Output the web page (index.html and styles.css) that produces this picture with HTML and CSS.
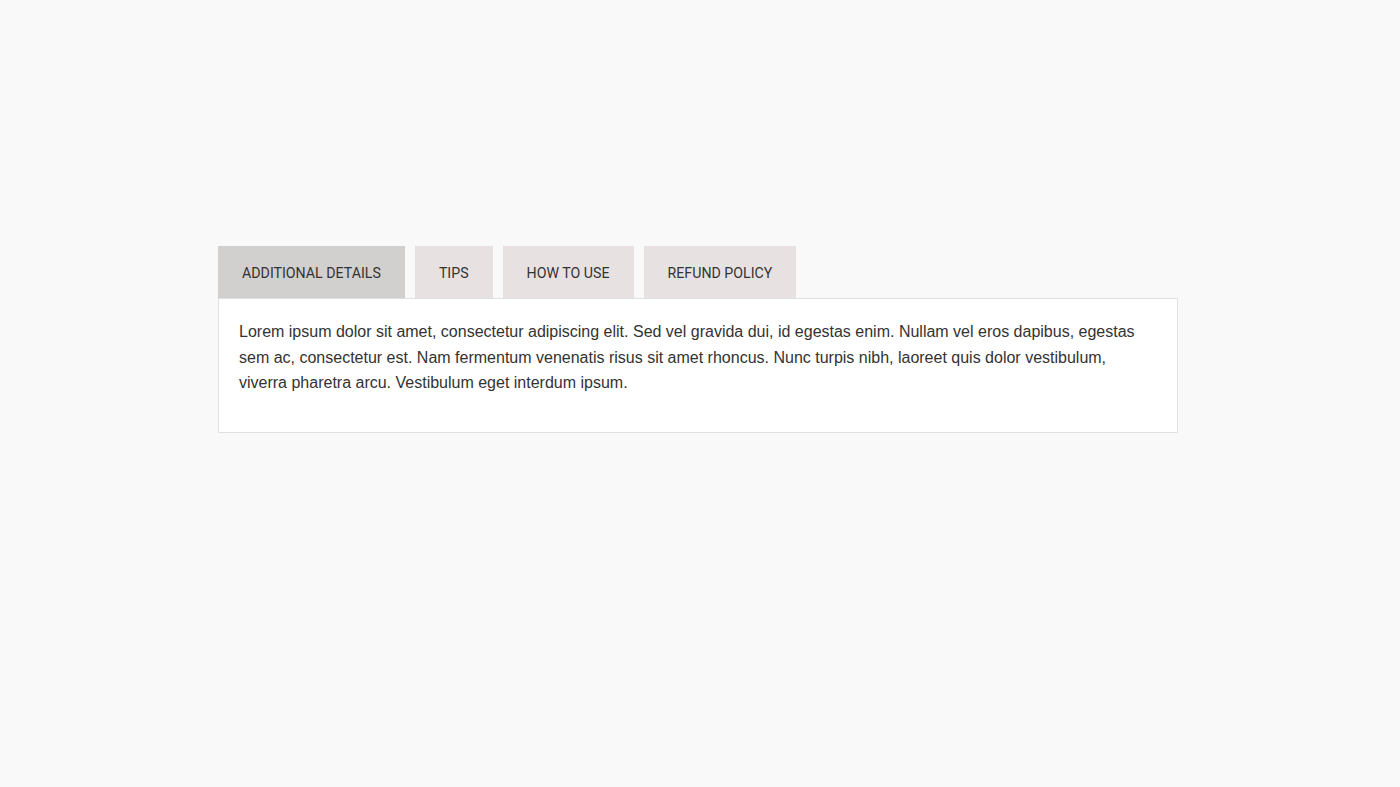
FILE: index.html
```html
<!DOCTYPE html>
<html>
<head>
<meta charset="utf-8">
<link rel="stylesheet" href="styles.css">
</head>
<body>
<div class="wrap">
  <div class="tabs">
    <div class="tab active">ADDITIONAL DETAILS</div>
    <div class="tab">TIPS</div>
    <div class="tab">HOW TO USE</div>
    <div class="tab">REFUND POLICY</div>
  </div>
  <div class="panel">
    <p>Lorem ipsum dolor sit amet, consectetur adipiscing elit. Sed vel gravida dui, id egestas enim. Nullam vel eros dapibus, egestas sem ac, consectetur est. Nam fermentum venenatis risus sit amet rhoncus. Nunc turpis nibh, laoreet quis dolor vestibulum, viverra pharetra arcu. Vestibulum eget interdum ipsum.</p>
  </div>
</div>
</body>
</html>
```
FILE: styles.css
```css
html, body {
  margin: 0;
  padding: 0;
  background: #f9f9f9;
}
body {
  height: 787px;
}
.wrap {
  width: 960px;
  margin: 0 0 0 218px;
  padding-top: 246px;
}
.tabs {
  display: flex;
  gap: 10px;
}
.tab {
  height: 52px;
  padding: 0 24px;
  display: flex;
  align-items: center;
  padding-top: 1px;
  box-sizing: border-box;
  background: #e7e1e1;
  color: #333;
  font-family: Roboto, "Liberation Sans", sans-serif;
  font-size: 14.2px;
}
.tab.active {
  background: #d1d0cf;
}
.panel {
  background: #fff;
  border: 1px solid #e0e0e0;
  padding: 20px 20px 20px;
}
.panel p {
  margin: 0 0 16px;
  font-family: "Liberation Sans", Arial, sans-serif;
  font-size: 16px;
  line-height: 25.6px;
  color: #333;
}
```
